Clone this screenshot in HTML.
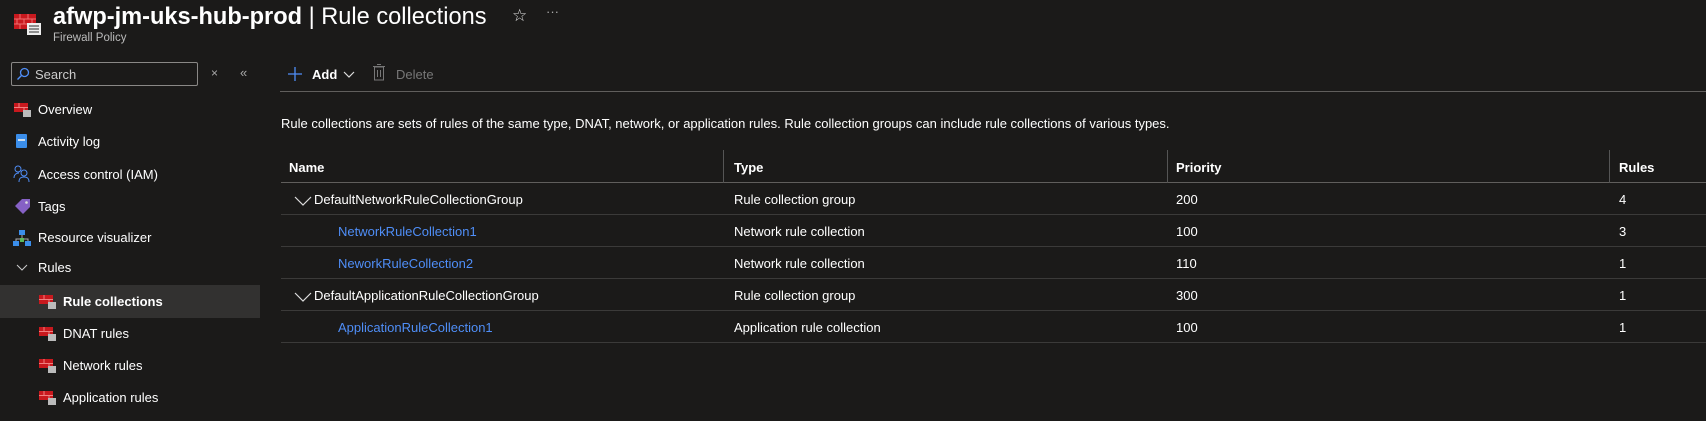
<!DOCTYPE html>
<html><head><meta charset="utf-8"><style>
*{margin:0;padding:0;box-sizing:border-box}
body{width:1706px;height:421px;background:#1b1a19;color:#fff;font-family:"Liberation Sans",sans-serif;font-size:13px;position:relative;overflow:hidden}
.a{position:absolute;white-space:nowrap}
.nav{position:absolute;left:38px;font-size:13px;line-height:16px}
.ico{position:absolute;width:18px;height:14px}
.row{position:absolute;left:0;right:0;height:32px;border-bottom:1px solid #3b3a39}
.row span{position:absolute;top:9px;white-space:nowrap}
.lnk{color:#4f8ef7}
</style></head><body>
<svg class="a" style="left:14px;top:12px" width="28" height="24" viewBox="0 0 28 24">
<rect x="0" y="2" width="22" height="15" fill="#c8191e"/>
<path d="M0 7H22M0 12H22M6 2V7M14 2V7M3 7V12M10 7V12M18 7V12M6 12V17M14 12V17" stroke="#f07070" stroke-width="1"/>
<rect x="13" y="11" width="14" height="12" fill="#eee"/>
<path d="M15 14H25M15 17H25M15 20H25" stroke="#555" stroke-width="1.2"/>
</svg>
<div class="a" style="left:53px;top:2px;font-size:23.6px;font-weight:bold;line-height:30px">afwp-jm-uks-hub-prod <span style="font-weight:normal">| Rule collections</span></div>
<div class="a" style="left:512px;top:6px;font-size:17px;color:#ddd">☆</div>
<div class="a" style="left:546px;top:4px;font-size:13px;color:#aaa">···</div>
<div class="a" style="left:53px;top:32px;font-size:11.5px;color:#bbb">Firewall Policy</div>

<div class="a" style="left:11px;top:62px;width:187px;height:24px;border:1px solid #8a8886;border-radius:2px"></div>
<svg class="a" style="left:16px;top:67px" width="14" height="14"><circle cx="8.5" cy="5.5" r="4" fill="none" stroke="#4f8ef7" stroke-width="1.3"/><path d="M5.5 8.5L1.5 12.5" stroke="#4f8ef7" stroke-width="1.4"/></svg>
<div class="a" style="left:35px;top:67px;color:#ccc">Search</div>
<div class="a" style="left:211px;top:66px;color:#aaa;font-size:12px">×</div>
<div class="a" style="left:240px;top:65px;color:#aaa;font-size:13px">«</div>

<svg class="ico" style="left:14px;top:103px" viewBox="0 0 18 14"><rect x="0" y="0" width="14" height="9" fill="#c8191e"/><path d="M0 4.5H14M5 0V4.5M10 4.5V9" stroke="#f08080"/><rect x="9" y="7" width="8" height="7" fill="#bbb"/></svg>
<div class="nav" style="top:102px">Overview</div>
<svg class="ico" style="left:15px;top:134px" viewBox="0 0 18 14"><rect x="1" y="0" width="11" height="14" rx="1" fill="#3b8eea"/><rect x="3" y="5" width="7" height="2" fill="#cde"/></svg>
<div class="nav" style="top:134px">Activity log</div>
<svg class="ico" style="left:13px;top:165px;height:18px" viewBox="0 0 18 18"><circle cx="5" cy="4" r="3" fill="none" stroke="#4f8ef7"/><circle cx="11" cy="8" r="3" fill="none" stroke="#4f8ef7"/><path d="M1 13C1 9 4 8 6 8M6 17C6 13 8 12 11 12C14 12 16 13 16 17" fill="none" stroke="#4f8ef7"/></svg>
<div class="nav" style="top:167px">Access control (IAM)</div>
<svg class="ico" style="left:14px;top:198px;height:16px" viewBox="0 0 16 16"><path d="M7 1H15V9L8 16L0 8Z" fill="#8661c5"/><circle cx="11.5" cy="4.5" r="1.3" fill="#ddd"/></svg>
<div class="nav" style="top:199px">Tags</div>
<svg class="ico" style="left:13px;top:230px;height:16px" viewBox="0 0 18 16"><path d="M9 4V9M3 13V9H15V13" stroke="#aaa" fill="none"/><rect x="6" y="0" width="6" height="5" fill="#3b8eea"/><rect x="0" y="11" width="6" height="5" fill="#3b8eea"/><rect x="12" y="11" width="6" height="5" fill="#3b8eea"/><rect x="7" y="8" width="4" height="4" fill="#5bb75b"/></svg>
<div class="nav" style="top:230px">Resource visualizer</div>
<svg class="a" style="left:16px;top:264px" width="12" height="8"><path d="M1 1L6 6L11 1" stroke="#ccc" fill="none"/></svg>
<div class="nav" style="top:260px">Rules</div>
<div class="a" style="left:0;top:285px;width:260px;height:33px;background:#323130"></div>
<svg class="ico" style="left:39px;top:295px" viewBox="0 0 18 14"><rect x="0" y="0" width="14" height="9" fill="#c8191e"/><path d="M0 4.5H14M5 0V4.5M10 4.5V9" stroke="#f08080"/><rect x="9" y="7" width="8" height="7" fill="#bbb"/></svg>
<div class="nav" style="left:63px;top:294px;font-weight:bold">Rule collections</div>
<svg class="ico" style="left:39px;top:327px" viewBox="0 0 18 14"><rect x="0" y="0" width="14" height="9" fill="#c8191e"/><path d="M0 4.5H14M5 0V4.5M10 4.5V9" stroke="#f08080"/><rect x="9" y="7" width="8" height="7" fill="#bbb"/></svg>
<div class="nav" style="left:63px;top:326px">DNAT rules</div>
<svg class="ico" style="left:39px;top:359px" viewBox="0 0 18 14"><rect x="0" y="0" width="14" height="9" fill="#c8191e"/><path d="M0 4.5H14M5 0V4.5M10 4.5V9" stroke="#f08080"/><rect x="9" y="7" width="8" height="7" fill="#bbb"/></svg>
<div class="nav" style="left:63px;top:358px">Network rules</div>
<svg class="ico" style="left:39px;top:391px" viewBox="0 0 18 14"><rect x="0" y="0" width="14" height="9" fill="#c8191e"/><path d="M0 4.5H14M5 0V4.5M10 4.5V9" stroke="#f08080"/><rect x="9" y="7" width="8" height="7" fill="#bbb"/></svg>
<div class="nav" style="left:63px;top:390px">Application rules</div>

<svg class="a" style="left:287px;top:66px" width="16" height="16"><path d="M8 1V15M1 8H15" stroke="#4f8ef7" stroke-width="1.3"/></svg>
<div class="a" style="left:312px;top:67px;font-weight:bold">Add</div>
<svg class="a" style="left:343px;top:71px" width="12" height="8"><path d="M1 1L6 6L11 1" stroke="#ddd" fill="none" stroke-width="1.2"/></svg>
<svg class="a" style="left:373px;top:64px" width="12" height="17"><rect x="1.5" y="3" width="9" height="13" fill="none" stroke="#777"/><path d="M0 2.5H12M4 0.5H8M4.5 6V13M7.5 6V13" stroke="#777"/></svg>
<div class="a" style="left:396px;top:67px;color:#777">Delete</div>
<div class="a" style="left:280px;top:91px;right:0;height:1px;background:#605e5c"></div>

<div class="a" style="left:281px;top:116px">Rule collections are sets of rules of the same type, DNAT, network, or application rules. Rule collection groups can include rule collections of various types.</div>

<div class="a" style="left:281px;top:150px;right:0;height:33px;border-bottom:1px solid #605e5c;font-weight:bold">
<span class="a" style="left:8px;top:10px">Name</span>
<span class="a" style="left:442px;top:0;width:1px;height:33px;background:#555"></span>
<span class="a" style="left:453px;top:10px">Type</span>
<span class="a" style="left:886px;top:0;width:1px;height:33px;background:#555"></span>
<span class="a" style="left:895px;top:10px">Priority</span>
<span class="a" style="left:1328px;top:0;width:1px;height:33px;background:#555"></span>
<span class="a" style="left:1338px;top:10px">Rules</span>
</div>
<div class="a" style="left:281px;top:183px;right:0">
<div class="row" style="top:0"><svg class="a" style="left:13px;top:13px" width="18" height="10"><path d="M1 1L9 9L17 1" stroke="#ddd" fill="none" stroke-width="1.2"/></svg><span style="left:33px">DefaultNetworkRuleCollectionGroup</span><span style="left:453px">Rule collection group</span><span style="left:895px">200</span><span style="left:1338px">4</span></div>
<div class="row" style="top:32px"><span class="lnk" style="left:57px">NetworkRuleCollection1</span><span style="left:453px">Network rule collection</span><span style="left:895px">100</span><span style="left:1338px">3</span></div>
<div class="row" style="top:64px"><span class="lnk" style="left:57px">NeworkRuleCollection2</span><span style="left:453px">Network rule collection</span><span style="left:895px">110</span><span style="left:1338px">1</span></div>
<div class="row" style="top:96px"><svg class="a" style="left:13px;top:13px" width="18" height="10"><path d="M1 1L9 9L17 1" stroke="#ddd" fill="none" stroke-width="1.2"/></svg><span style="left:33px">DefaultApplicationRuleCollectionGroup</span><span style="left:453px">Rule collection group</span><span style="left:895px">300</span><span style="left:1338px">1</span></div>
<div class="row" style="top:128px"><span class="lnk" style="left:57px">ApplicationRuleCollection1</span><span style="left:453px">Application rule collection</span><span style="left:895px">100</span><span style="left:1338px">1</span></div>
</div>
</body></html>
